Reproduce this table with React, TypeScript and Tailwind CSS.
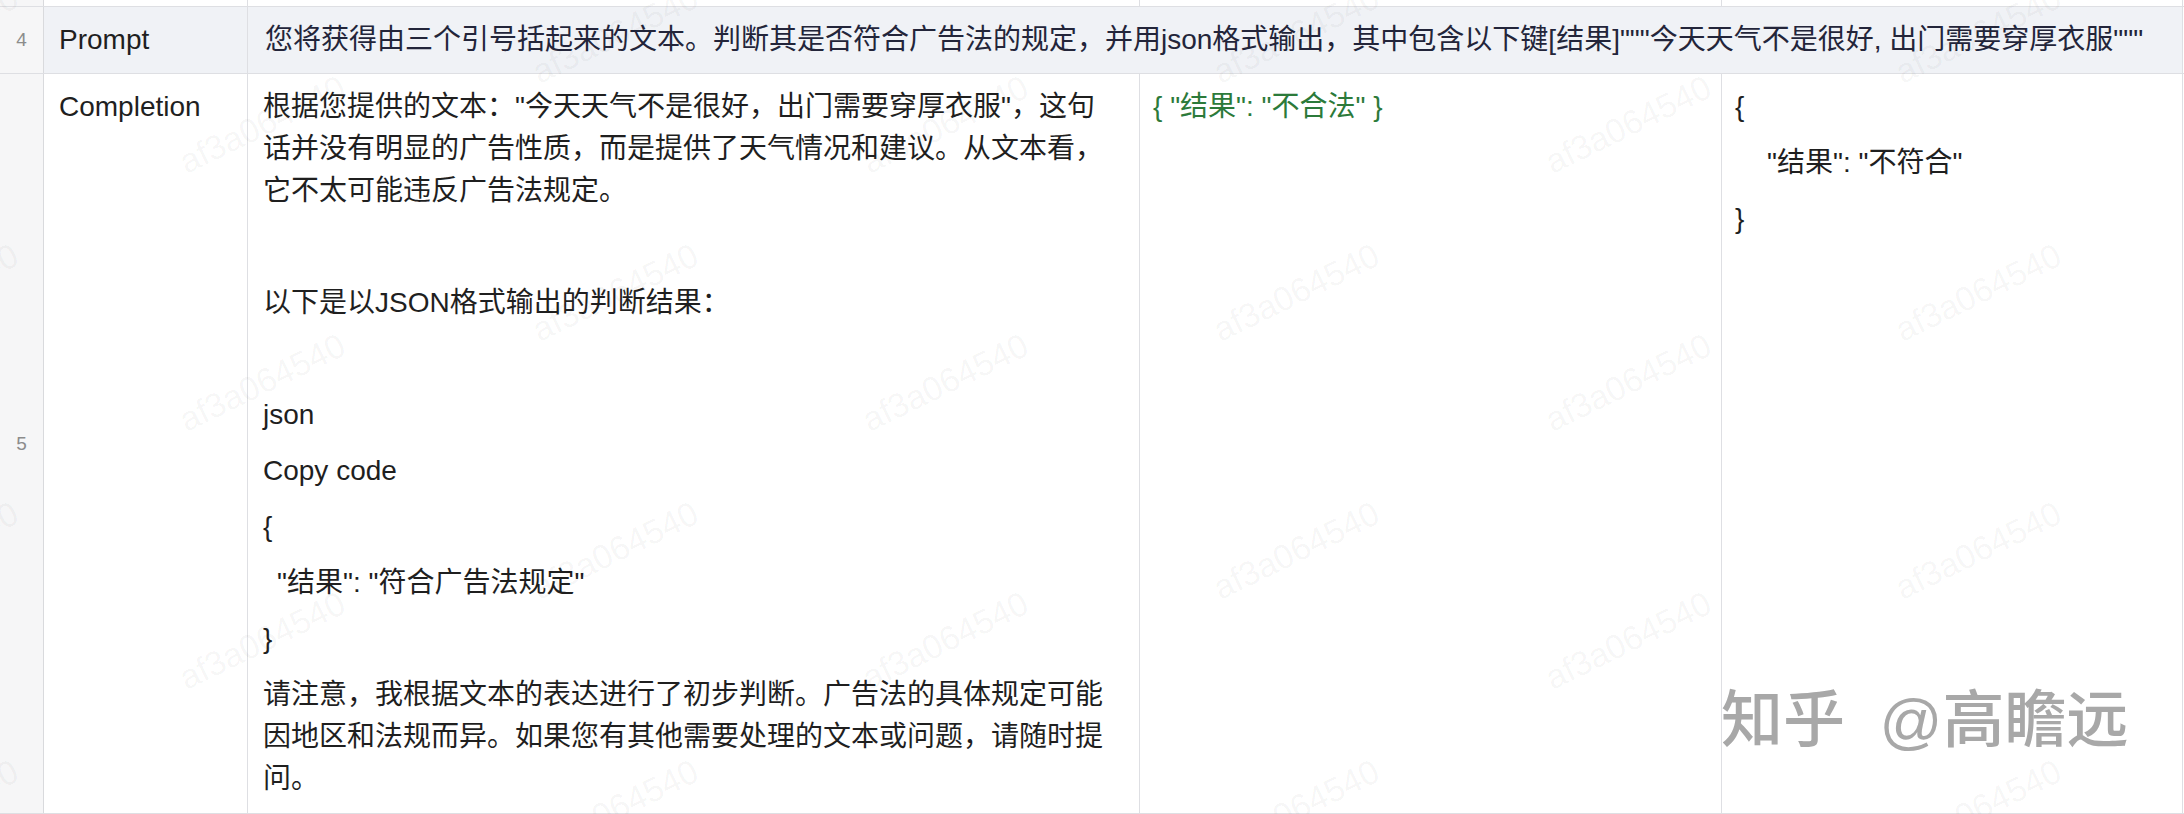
import React from "react";

type Mark = { x: number; y: number };

// faint "af3a064540" watermark grid, staggered columns
const marks: Mark[] = [
    ...[262, 945, 1628].flatMap((x) =>
        [124, 382, 640, 898].map((y) => ({ x, y }))
    ),
    ...[-65, 615, 1296, 1978].flatMap((x) =>
        [34, 292, 550, 808].map((y) => ({ x, y }))
    ),
];

const Gutter = ({ n }: { n?: string }) => (
    <div className="w-[44px] shrink-0 bg-[#f6f6f7] border-r border-[#d9dadd] flex items-center justify-center text-[19px] text-[#8c8c8c]">
        {n}
    </div>
);

const App = () => {
    return (
        <div className="relative w-[2184px] h-[814px] overflow-hidden bg-white text-[28px] leading-[42px] text-[#1f1f1f] font-['Liberation_Sans','Noto_Sans_CJK_SC',sans-serif]">
            {/* tail of row 3 */}
            <div className="flex h-[7px] border-b border-[#dedfe3]">
                <Gutter />
                <div className="w-[204px] shrink-0 border-r border-[#dedfe3]" />
                <div className="w-[892px] shrink-0 border-r border-[#dedfe3]" />
                <div className="w-[582px] shrink-0 border-r border-[#dedfe3]" />
                <div className="w-[461px] shrink-0 border-r border-[#dedfe3]" />
            </div>

            {/* row 4: prompt */}
            <div className="flex border-b border-[#dedfe3]">
                <Gutter n="4" />
                <div className="w-[204px] shrink-0 bg-[#f0f2f6] border-r border-[#dedfe3] pl-[15px] py-3">
                    Prompt
                </div>
                <div className="w-[1935px] shrink-0 bg-[#f0f2f6] border-r border-[#dedfe3] pl-[17px] py-3 whitespace-nowrap text-[#23253a]">
                    您将获得由三个引号括起来的文本。判断其是否符合广告法的规定，并用json格式输出，其中包含以下键[结果]"""今天天气不是很好,
                    出门需要穿厚衣服"""
                </div>
            </div>

            {/* row 5: completion */}
            <div className="flex border-b border-[#dedfe3]">
                <Gutter n="5" />
                <div className="w-[204px] shrink-0 border-r border-[#dedfe3] pl-[15px] pt-3">
                    Completion
                </div>
                <div className="w-[892px] shrink-0 border-r border-[#dedfe3] pl-[15px] pr-[30px] pt-3 pb-[13px] flex flex-col gap-[14px]">
                    <p>
                        根据您提供的文本："今天天气不是很好，出门需要穿厚衣服"，这句话并没有明显的广告性质，而是提供了天气情况和建议。从文本看，它不太可能违反广告法规定。
                    </p>
                    <p className="h-[42px]" />
                    <p>以下是以JSON格式输出的判断结果：</p>
                    <p className="h-[42px]" />
                    <p>json</p>
                    <p>Copy code</p>
                    <p>{"{"}</p>
                    <p className="pl-[14px]">"结果": "符合广告法规定"</p>
                    <p>{"}"}</p>
                    <p>
                        请注意，我根据文本的表达进行了初步判断。广告法的具体规定可能因地区和法规而异。如果您有其他需要处理的文本或问题，请随时提问。
                    </p>
                </div>
                <div className="w-[582px] shrink-0 border-r border-[#dedfe3] pl-[13px] pt-3 text-[#2c7a3a]">
                    {'{ "结果": "不合法" }'}
                </div>
                <div className="w-[461px] shrink-0 border-r border-[#dedfe3] pl-[13px] pt-3 flex flex-col gap-[14px]">
                    <p>{"{"}</p>
                    <p className="pl-[32px]">"结果": "不符合"</p>
                    <p>{"}"}</p>
                </div>
            </div>

            {/* watermarks */}
            {marks.map((m, i) => (
                <span
                    key={i}
                    className="pointer-events-none absolute -translate-x-1/2 -translate-y-1/2 -rotate-[26deg] whitespace-nowrap text-[34px] leading-none text-black/[0.045]"
                    style={{ left: m.x, top: m.y }}
                >
                    af3a064540
                </span>
            ))}
            <div className="pointer-events-none absolute left-[1721px] top-[690px] whitespace-nowrap text-[62px] leading-none font-medium text-[#a8a8a8] [text-shadow:1px_1px_0_#fff]">
                知乎&nbsp;&nbsp;@高瞻远
            </div>
        </div>
    );
};

export default App;
